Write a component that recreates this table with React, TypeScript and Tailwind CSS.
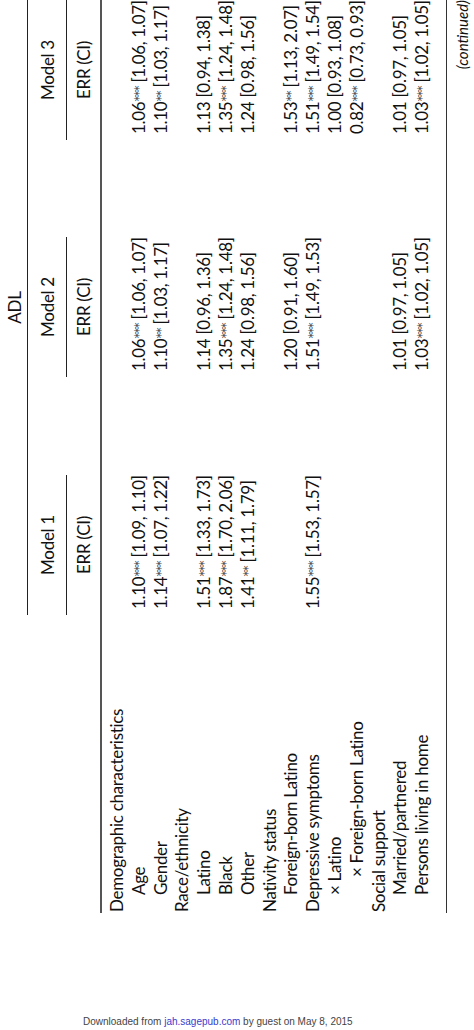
import React from 'react';

type Cell = { v: string; s?: string; ci: string } | null;

interface Row {
  label: string;
  indent: 0 | 1 | 2;
  m1?: Cell;
  m2?: Cell;
  m3?: Cell;
}

const rows: Row[] = [
  { label: 'Demographic characteristics', indent: 0 },
  {
    label: 'Age',
    indent: 1,
    m1: { v: '1.10', s: '***', ci: '[1.09, 1.10]' },
    m2: { v: '1.06', s: '***', ci: '[1.06, 1.07]' },
    m3: { v: '1.06', s: '***', ci: '[1.06, 1.07]' },
  },
  {
    label: 'Gender',
    indent: 1,
    m1: { v: '1.14', s: '***', ci: '[1.07, 1.22]' },
    m2: { v: '1.10', s: '**', ci: '[1.03, 1.17]' },
    m3: { v: '1.10', s: '**', ci: '[1.03, 1.17]' },
  },
  { label: 'Race/ethnicity', indent: 0 },
  {
    label: 'Latino',
    indent: 1,
    m1: { v: '1.51', s: '***', ci: '[1.33, 1.73]' },
    m2: { v: '1.14', ci: '[0.96, 1.36]' },
    m3: { v: '1.13', ci: '[0.94, 1.38]' },
  },
  {
    label: 'Black',
    indent: 1,
    m1: { v: '1.87', s: '***', ci: '[1.70, 2.06]' },
    m2: { v: '1.35', s: '***', ci: '[1.24, 1.48]' },
    m3: { v: '1.35', s: '***', ci: '[1.24, 1.48]' },
  },
  {
    label: 'Other',
    indent: 1,
    m1: { v: '1.41', s: '**', ci: '[1.11, 1.79]' },
    m2: { v: '1.24', ci: '[0.98, 1.56]' },
    m3: { v: '1.24', ci: '[0.98, 1.56]' },
  },
  { label: 'Nativity status', indent: 0 },
  {
    label: 'Foreign-born Latino',
    indent: 1,
    m2: { v: '1.20', ci: '[0.91, 1.60]' },
    m3: { v: '1.53', s: '**', ci: '[1.13, 2.07]' },
  },
  {
    label: 'Depressive symptoms',
    indent: 0,
    m1: { v: '1.55', s: '***', ci: '[1.53, 1.57]' },
    m2: { v: '1.51', s: '***', ci: '[1.49, 1.53]' },
    m3: { v: '1.51', s: '***', ci: '[1.49, 1.54]' },
  },
  {
    label: '× Latino',
    indent: 1,
    m3: { v: '1.00', ci: '[0.93, 1.08]' },
  },
  {
    label: '× Foreign-born Latino',
    indent: 2,
    m3: { v: '0.82', s: '***', ci: '[0.73, 0.93]' },
  },
  { label: 'Social support', indent: 0 },
  {
    label: 'Married/partnered',
    indent: 1,
    m2: { v: '1.01', ci: '[0.97, 1.05]' },
    m3: { v: '1.01', ci: '[0.97, 1.05]' },
  },
  {
    label: 'Persons living in home',
    indent: 1,
    m2: { v: '1.03', s: '***', ci: '[1.02, 1.05]' },
    m3: { v: '1.03', s: '***', ci: '[1.02, 1.05]' },
  },
];

const cols = 'grid grid-cols-[298px_140px_98px_140px_97px_140px]';

const indentClass = ['pl-px', 'pl-[18px]', 'pl-[36px]'];

const Value: React.FC<{ cell?: Cell }> = ({ cell }) => {
  if (!cell) return <div />;
  return (
    <div className="pl-[6px] whitespace-nowrap">
      {cell.v}
      {cell.s && (
        <span
          className="relative top-[-2px] text-[12px] leading-none tracking-[-1px] text-[#444]"
          style={{ fontFamily: '"DejaVu Sans", sans-serif' }}
        >
          {cell.s}
        </span>
      )}{' '}
      {cell.ci}
    </div>
  );
};

const App: React.FC = () => {
  return (
    <div className="w-[474px] h-[1030px] overflow-hidden bg-white flex flex-col">
      <div className="h-[1016px] shrink-0">
        <div
          className="w-[1030px] h-[474px] origin-top-left -rotate-90 translate-y-[1030px] pl-[117px] text-[17px] tracking-[-0.3px] text-[#111]"
          style={{ fontFamily: 'Lato, "Open Sans", sans-serif' }}
        >
          {/* spanner header */}
          <div className={`${cols} h-[28px]`}>
            <div />
            <div className="col-span-5 border-b border-[#222] text-center pt-[5px] leading-[20px]">ADL</div>
          </div>
          {/* model header */}
          <div className={`${cols} h-[39px]`}>
            <div />
            <div className="border-b border-[#222] text-center pt-[10px] leading-[20px]">Model 1</div>
            <div />
            <div className="border-b border-[#222] text-center pt-[10px] leading-[20px]">Model 2</div>
            <div />
            <div className="border-b border-[#222] text-center pt-[10px] leading-[20px]">Model 3</div>
          </div>
          {/* ERR header */}
          <div className={`${cols} h-[35px] border-b-2 border-[#555]`}>
            <div />
            <div className="text-center pt-[7px] leading-[20px]">ERR (CI)</div>
            <div />
            <div className="text-center pt-[7px] leading-[20px]">ERR (CI)</div>
            <div />
            <div className="text-center pt-[7px] leading-[20px]">ERR (CI)</div>
          </div>
          {/* body */}
          <div className="pt-[4px] pb-[13px] border-b border-[#333]">
            {rows.map((r) => (
              <div key={r.label} className={`${cols} h-[21.8px] leading-[21.8px]`}>
                <div className={`${indentClass[r.indent]} whitespace-nowrap`}>{r.label}</div>
                <Value cell={r.m1} />
                <div />
                <Value cell={r.m2} />
                <div />
                <Value cell={r.m3} />
              </div>
            ))}
          </div>
          <div className="mt-[5px] text-right italic text-[15px] leading-[20px] tracking-normal">(continued)</div>
        </div>
      </div>
      <div
        className="pl-[83px] text-[10px] leading-[12px] text-[#444] whitespace-nowrap"
        style={{ fontFamily: '"Liberation Sans", Arial, sans-serif' }}
      >
        Downloaded from <span className="text-[#3a3acc]">jah.sagepub.com</span> by guest on May 8, 2015
      </div>
    </div>
  );
};

export default App;
